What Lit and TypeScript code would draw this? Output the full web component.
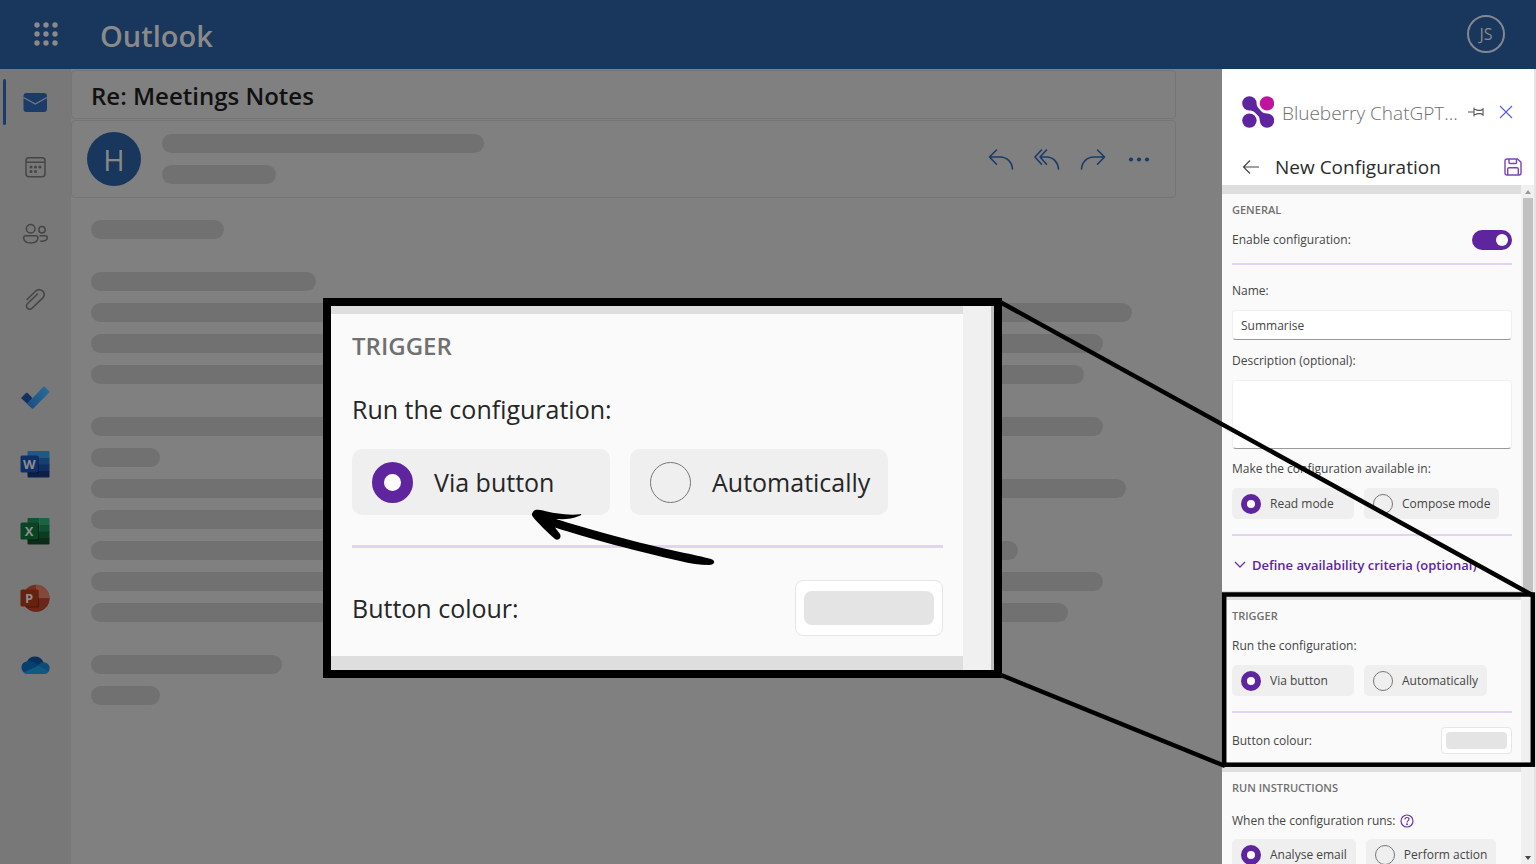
import { LitElement, html, css, svg, nothing } from "lit";
import { customElement, property, state } from "lit/decorators.js";
import { styleMap } from "lit/directives/style-map.js";

/** Placeholder paragraphs of the message body; each number is a line's width in percent. */
const BODY_LINES: number[][] = [
  [12.3],
  [20.7, 95.9, 93.3, 91.5],
  [93.3, 6.4, 95.4, 80, 85.4, 93.3, 90],
  [17.6, 6.4],
];

const icons = {
  waffle: svg`<svg width="26" height="26" viewBox="0 0 26 26" fill="currentColor">
    ${[4, 13, 22].map((y) => [4, 13, 22].map((x) => svg`<circle cx=${x} cy=${y} r="2.7"/>`))}</svg>`,
  mail: svg`<svg width="28" height="28" viewBox="0 0 28 28"><rect x="2.500" y="5" width="23.500" height="19" rx="3" fill="#1b3b68"/>
    <path d="M2.500 9.500 14.200 16 26 9.500" fill="none" stroke="#787878" stroke-width="1.300"/></svg>`,
  calendar: svg`<svg width="28" height="28" viewBox="0 0 28 28" fill="none" stroke="#454545" stroke-width="1.500"><rect x="5" y="3.700" width="19" height="19" rx="3"/>
    <path d="M5 8.200h19"/><g fill="#454545" stroke="none"><circle cx="10" cy="13" r="1.500"/><circle cx="14.500" cy="13" r="1.500"/><circle cx="19" cy="13" r="1.500"/><circle cx="10" cy="17.500" r="1.500"/><circle cx="14.500" cy="17.500" r="1.500"/></g></svg>`,
  people: svg`<svg width="28" height="28" viewBox="0 0 28 28" fill="none" stroke="#454545" stroke-width="1.500"><circle cx="9.700" cy="8.800" r="4.300"/>
    <circle cx="21" cy="9.800" r="3.200"/><path d="M4.700 15.700h10.200a2 2 0 0 1 2 2c0 3.300-3 5.200-7.100 5.200s-7.100-1.900-7.100-5.200a2 2 0 0 1 2-2zM18.500 15.700h5.800a2 2 0 0 1 2 2c0 2.300-2.500 3.700-7 3.400"/></svg>`,
  clip: svg`<svg width="28" height="28" viewBox="0 0 28 28" fill="none" stroke="#454545" stroke-width="1.500" stroke-linecap="round"><path d="M6 13.500 14.800 5a5 5 0 0 1 7.800 1.200c1.100 2 .6 4.200-.8 5.700L11 22.300a3.200 3.200 0 0 1-4.600-4.500L16.500 8"/></svg>`,
  todo: svg`<svg width="30" height="28" viewBox="0 0 30 28"><defs><linearGradient id="td" x1="0" y1="1" x2="1" y2="0"><stop offset="0" stop-color="#1b4a86"/><stop offset="1" stop-color="#286f98"/></linearGradient></defs>
    <path d="M1.500 14.500 6 10q.8-.6 1.600 0l4.800 5-5 6L1.500 15.500q-.4-.5 0-1z" fill="#14305f"/>
    <path d="M7 21 23.300 3.700q.7-.6 1.400 0l4.500 4.500q.5.600 0 1.200L13.300 25.500q-.8.600-1.500 0z" fill="url(#td)"/></svg>`,
  word: svg`<svg width="30" height="28" viewBox="0 0 30 28"><path d="M8.500 1h20q1 0 1 1v6h-22V2q0-1 1-1z" fill="#1f5785"/><path d="M7.500 8h22v7h-22z" fill="#163f70"/><path d="M7.500 14.500h22v7h-22z" fill="#0f2f62"/><path d="M7.500 21h22v5.500q0 1-1 1h-20q-1 0-1-1z" fill="#0a2048"/><path d="M7.500 6h10.500q1 0 1 1v15q0 1.500-1.500 1.500h-10z" opacity=".35"/><rect x=".5" y="5.500" width="17.500" height="17" rx="1.500" fill="#0e2f68"/>
    <text x="9.200" y="18.700" text-anchor="middle" class="glyph">W</text></svg>`,
  excel: svg`<svg width="30" height="28" viewBox="0 0 30 28"><path d="M8.500 1h11v7h-12V2q0-1 1-1z" fill="#115234"/><path d="M19.500 1h9q1 0 1 1v6h-10z" fill="#196442"/><path d="M7.500 8h12v7h-12z" fill="#0c3a22"/><path d="M19.500 8h10v7h-10z" fill="#11502f"/><path d="M7.500 14.500h22v7h-22z" fill="#0b3c20"/><path d="M7.500 21h22v5.500q0 1-1 1h-20q-1 0-1-1z" fill="#0c2c1a"/><path d="M7.500 6h10.500q1 0 1 1v15q0 1.500-1.500 1.500h-10z" opacity=".35"/><rect x=".5" y="5.500" width="17.500" height="17" rx="1.500" fill="#0a4523"/>
    <text x="9.200" y="18.700" text-anchor="middle" class="glyph">X</text></svg>`,
  powerpoint: svg`<svg width="30" height="28" viewBox="0 0 30 28"><circle cx="16" cy="14.200" r="13.500" fill="#74301e"/><path d="M16 .7a13.500 13.500 0 0 1 13.500 13.500H16z" fill="#84493a"/><path d="M16 14.200h13.500a13.500 13.500 0 0 1-27 0z" fill="#6a2618"/><path d="M5 6h13q1 0 1 1v15q0 1.500-1.500 1.500H6z" opacity=".35"/><rect x=".5" y="5.500" width="17.500" height="17" rx="1.500" fill="#66210f"/>
    <text x="9.200" y="18.700" text-anchor="middle" class="glyph">P</text></svg>`,
  onedrive: svg`<svg width="30" height="28" viewBox="0 0 30 28"><path d="M7 10.500a9 9 0 0 1 16.500 1L17 17z" fill="#05315c"/><path d="M6.500 22.500A6.200 6.200 0 0 1 7.500 10.200q4-.8 7.500 1.800l5 3-9 7.500z" fill="#083f70"/><path d="M18 14q3-3.500 7-2.500a5.700 5.700 0 0 1 3.500 9L16 16z" fill="#0c4c77"/><path d="M3.500 21.500 18.200 14.700l10.600 5.500q-1.300 2.800-4.800 2.800H7q-2.200 0-3.500-1.500z" fill="#105a82"/></svg>`,
  reply: svg`<svg width="28" height="24" viewBox="0 0 28 24" fill="none" stroke="currentColor" stroke-width="1.600" stroke-linecap="round" stroke-linejoin="round"><path d="M9.500 3 2.500 10l7 7.200M2.500 10H13c7 0 12 5 12.500 12"/></svg>`,
  replyAll: svg`<svg width="28" height="24" viewBox="0 0 28 24" fill="none" stroke="currentColor" stroke-width="1.600" stroke-linecap="round" stroke-linejoin="round"><path d="M8.500 3 2 10l6.500 7.200M13.500 3 7 10l6.500 7.200M7 10h6.500c6.500 0 11.500 5 12 12"/></svg>`,
  forward: svg`<svg width="28" height="24" viewBox="0 0 28 24" fill="none" stroke="currentColor" stroke-width="1.600" stroke-linecap="round" stroke-linejoin="round"><path d="M18.500 3l7 7-7 7.200M25.500 10H15C8 10 3 15 2.500 22"/></svg>`,
  more: svg`<svg width="28" height="24" viewBox="0 0 28 24" fill="currentColor"><circle cx="6" cy="12.500" r="2.100"/><circle cx="14" cy="12.500" r="2.100"/><circle cx="22" cy="12.500" r="2.100"/></svg>`,
  logo: svg`<svg width="32" height="32" viewBox="0 0 32 32" fill="#5f259f"><circle cx="25" cy="7.400" r="7.200" fill="#c0149f"/><circle cx="7.400" cy="24.600" r="7.200"/>
    <path d="M7.400.2a7.200 7.200 0 0 1 7.200 7.200c0 1.600.6 3 1.800 4.600l2.800 3.200c1.600 1.500 3.500 2.200 5.800 2.200a7.200 7.200 0 1 1-7.200 7.200c0-1.800-.6-3.600-2-5l-3-3.200c-1.700-1.400-3.300-1.800-5.400-1.800a7.200 7.200 0 0 1 0-14.400z"/></svg>`,
  pin: svg`<svg width="18" height="14" viewBox="0 0 18 14" fill="none" stroke="#555" stroke-width="1.100"><path d="M1 7h6M7 2.500v9M7 4.500h1.500q1.500.9 3 .9h2.500l2-1.600v6.400l-2-1.600h-2.500q-1.500 0-3 .9H7"/></svg>`,
  close: svg`<svg width="14" height="14" viewBox="0 0 14 14" fill="none" stroke="#5a5cf6" stroke-width="1.200"><path d="M1 1l12 12M13 1 1 13"/></svg>`,
  back: svg`<svg width="18" height="16" viewBox="0 0 18 16" fill="none" stroke="#444" stroke-width="1.200"><path d="M17 8H1.500M8 1.500 1.500 8 8 14.500"/></svg>`,
  save: svg`<svg width="18" height="18" viewBox="0 0 18 18" fill="none" stroke="#7a45b4" stroke-width="1.400" stroke-linejoin="round"><path d="M1 3q0-2 2-2h10.500L17 4.200V15q0 2-2 2H3q-2 0-2-2z"/><path d="M5 1v3.500q0 1 1 1h5.500q1 0 1-1V1M3.700 17v-6q0-1.300 1.300-1.300h8q1.300 0 1.300 1.300v6"/></svg>`,
  chevron: svg`<svg width="12" height="8" viewBox="0 0 12 8" fill="none" stroke="#6a35aa" stroke-width="1.300"><path d="M1 1l5 5 5-5"/></svg>`,
  help: svg`<svg width="14" height="14" viewBox="0 0 14 14" fill="none" stroke="#6a35aa" stroke-width="1.200"><circle cx="7" cy="7" r="6"/><path d="M5 5.500C5 4.200 5.800 3.500 7 3.500s2 .7 2 1.800c0 1.200-2 1.500-2 3.200"/><circle cx="7" cy="10.300" r=".4" fill="#6a35aa"/></svg>`,
};

@customElement("option-pair")
class OptionPair extends LitElement {
  @property() name = "";
  @property() label = "";
  @property({ type: Array }) options: string[] = [];
  @property({ type: Boolean, reflect: true }) large = false;
  @state() private chosen = 0;

  static styles = css`
    :host {
      display: block;
      --dot: 20px;
      --font: 12px;
      color: #454545;
    }
    :host([large]) {
      --dot: 41px;
      --font: 25px;
      color: #262626;
    }
    .group {
      display: flex;
      gap: 10px;
      margin: 0;
      padding: 0;
      border: 0;
    }
    .option {
      box-sizing: border-box;
      display: flex;
      align-items: center;
      gap: 9px;
      height: 31px;
      min-width: 122px;
      padding: 0 9px;
      border-radius: 5px;
      background: #efefef;
      font-size: var(--font);
      white-space: nowrap;
    }
    .dot {
      appearance: none;
      flex: none;
      box-sizing: border-box;
      width: var(--dot);
      height: var(--dot);
      margin: 0;
      border: 1px solid #777;
      border-radius: 50%;
    }
    .dot:checked {
      border: 6px solid #5f259f;
      background: #fff;
    }
    :host([large]) .group {
      gap: 20px;
    }
    :host([large]) .option {
      gap: 21px;
      height: 66px;
      min-width: 258px;
      padding: 0 14px 0 20px;
      border-radius: 10px;
    }
    :host([large]) .dot:checked {
      border-width: 12px;
    }
  `;

  render() {
    return html`<fieldset class="group" role="radiogroup" aria-label=${this.label}>
      ${this.options.map(
        (text, i) => html`<label class="option">
          <input class="dot" type="radio" name=${this.name} .checked=${i === this.chosen} @change=${() => (this.chosen = i)} />
          <span>${text}</span>
        </label>`
      )}
    </fieldset>`;
  }
}

@customElement("trigger-section")
class TriggerSection extends LitElement {
  @property({ type: Boolean, reflect: true }) large = false;

  static styles = css`
    :host {
      display: block;
      padding: 0 9px 9px 10px;
      border-top: 9px solid #dedede;
      background: #fafafa;
      color: #454545;
      font-size: 12px;
      line-height: 20px;
    }
    .title {
      margin: 0;
      color: #707070;
      font-size: 11px;
      font-weight: 600;
      line-height: 31px;
    }
    .label {
      margin: 5px 0 9px;
    }
    .rule {
      height: 2px;
      margin: 15px 0 14px;
      border: 0;
      background: #e0d4ef;
    }
    .row {
      display: flex;
      align-items: center;
      justify-content: space-between;
    }
    .colour {
      appearance: none;
      box-sizing: border-box;
      width: 71px;
      height: 27px;
      padding: 4px;
      border: 1px solid #e6e6e6;
      border-radius: 4px;
      background: #fff;
    }
    .colour::-webkit-color-swatch-wrapper {
      padding: 0;
    }
    .colour::-webkit-color-swatch {
      border: 0;
      border-radius: 4px;
    }
    :host([large]) {
      padding: 0 20px 20px 21px;
      border-top-width: 8px;
      color: #262626;
      font-size: 25px;
      line-height: 40px;
    }
    :host([large]) .title {
      font-size: 24px;
      line-height: 64px;
    }
    :host([large]) .label {
      margin: 11px 0 20px;
    }
    :host([large]) .rule {
      height: 3px;
      margin: 30px 0 32px;
    }
    :host([large]) .colour {
      width: 148px;
      height: 56px;
      padding: 10px 8px;
      border-radius: 8px;
    }
    :host([large]) .colour::-webkit-color-swatch {
      border-radius: 8px;
    }
  `;

  render() {
    return html`
      <h2 class="title">TRIGGER</h2>
      <div class="label">Run the configuration:</div>
      <option-pair
        name="trigger"
        label="Run the configuration"
        .options=${["Via button", "Automatically"]}
        ?large=${this.large}
      ></option-pair>
      <hr class="rule" />
      <div class="row">
        <label for="colour">Button colour:</label>
        <input class="colour" id="colour" type="color" value="#e4e4e4" />
      </div>
    `;
  }
}

@customElement("config-panel")
class ConfigPanel extends LitElement {
  static styles = css`
    :host {
      display: flex;
      flex-direction: column;
      box-sizing: border-box;
      min-height: 0;
      overflow: hidden;
      border-right: 2px solid #e4e4e4;
      background: #fff;
      color: #454545;
      font-size: 12px;
      line-height: 20px;
    }
    button {
      display: flex;
      align-items: center;
      padding: 0;
      border: 0;
      background: none;
      font: inherit;
      cursor: pointer;
    }
    .app {
      display: flex;
      align-items: center;
      gap: 8px;
      height: 32px;
      padding: 27px 21px 20px 20px;
    }
    .logo {
      display: flex;
    }
    .app-name {
      flex: 1;
      color: #6f6f6f;
      font-size: 19px;
      font-weight: 300;
      line-height: 32px;
      padding-top: 2px;
      white-space: nowrap;
    }
    .close {
      margin-left: 6px;
    }
    .heading {
      display: flex;
      align-items: center;
      gap: 15px;
      height: 37px;
      padding: 0 12px 0 20px;
    }
    .heading-text {
      flex: 1;
      margin: 0;
      color: #2c2c2c;
      font-size: 19px;
      font-weight: 400;
    }
    .body {
      display: flex;
      flex: 1;
      min-height: 0;
    }
    .content {
      flex: 1;
      overflow: hidden;
      background: #fafafa;
    }
    .section {
      padding: 0 9px 0 10px;
      border-top: 9px solid #dedede;
    }
    .title {
      margin: 0;
      color: #707070;
      font-size: 11px;
      font-weight: 600;
      line-height: 31px;
    }
    .switch-row {
      display: flex;
      align-items: center;
      justify-content: space-between;
      height: 29px;
    }
    .switch {
      appearance: none;
      display: flex;
      align-items: center;
      justify-content: flex-end;
      box-sizing: border-box;
      width: 40px;
      height: 20px;
      margin: 0;
      padding: 0 4px;
      border-radius: 10px;
      background: #5f259f;
    }
    .switch::before {
      content: "";
      width: 12px;
      height: 12px;
      border-radius: 50%;
      background: #fff;
    }
    .rule {
      height: 2px;
      margin: 9px 0 16px;
      border: 0;
      background: #e0d4ef;
    }
    .label {
      display: block;
      margin: 11px 0 9px;
    }
    .field {
      display: block;
      box-sizing: border-box;
      width: 100%;
      height: 30px;
      padding: 0 8px;
      border: 1px solid #f0f0f0;
      border-bottom-color: #999;
      border-radius: 4px;
      background: #fff;
      color: #454545;
      font: inherit;
      resize: none;
    }
    .area {
      height: 69px;
    }
    .modes {
      margin: 10px 0 9px;
    }
    .rule-low {
      margin: 15px 0 19px;
    }
    .expand {
      gap: 6px;
      padding: 0 2px 16px;
      color: #5f259f;
      font-size: 13px;
      font-weight: 600;
      line-height: 20px;
      white-space: nowrap;
    }
    .with-help {
      display: flex;
      align-items: center;
      gap: 5px;
      margin: 8px 0;
    }
    .scroll {
      display: flex;
      flex-direction: column;
      align-items: center;
      justify-content: space-between;
      width: 13px;
      background: #f0f0f0;
    }
    .arrow {
      flex: none;
      width: 0;
      margin: 5px 0 4px;
      border: 3px solid transparent;
      border-top: 0;
      border-bottom: 4px solid #999;
    }
    .arrow-down {
      border-top: 4px solid #444;
      border-bottom: 0;
    }
    .thumb {
      width: 10px;
      height: 58%;
      margin-bottom: auto;
      background: #c1c1c1;
    }
  `;

  render() {
    return html`
      <div class="app">
        <span class="logo">${icons.logo}</span>
        <span class="app-name">Blueberry ChatGPT...</span>
        <button aria-label="Pin">${icons.pin}</button>
        <button class="close" aria-label="Close">${icons.close}</button>
      </div>
      <div class="heading">
        <button aria-label="Back">${icons.back}</button>
        <h1 class="heading-text">New Configuration</h1>
        <button aria-label="Save">${icons.save}</button>
      </div>
      <div class="body">
        <div class="content">
          <section class="section">
            <h2 class="title">GENERAL</h2>
            <div class="switch-row">
              <label for="enable">Enable configuration:</label>
              <input class="switch" id="enable" type="checkbox" role="switch" checked />
            </div>
            <hr class="rule" />
            <label class="label" for="name">Name:</label>
            <input class="field" id="name" type="text" value="Summarise" />
            <label class="label" for="description">Description (optional):</label>
            <textarea class="field area" id="description"></textarea>
            <div class="label modes">Make the configuration available in:</div>
            <option-pair name="mode" label="Make the configuration available in" .options=${["Read mode", "Compose mode"]}></option-pair>
            <hr class="rule rule-low" />
            <button class="expand">${icons.chevron}Define availability criteria (optional)</button>
          </section>
          <trigger-section></trigger-section>
          <section class="section">
            <h2 class="title">RUN INSTRUCTIONS</h2>
            <div class="with-help">When the configuration runs: ${icons.help}</div>
            <option-pair name="action" label="When the configuration runs" .options=${["Analyse email", "Perform action"]}></option-pair>
          </section>
        </div>
        <div class="scroll"><i class="arrow"></i><i class="thumb"></i><i class="arrow arrow-down"></i></div>
      </div>
    `;
  }
}

@customElement("app-root")
class AppRoot extends LitElement {
  static styles = css`
    :host {
      position: relative;
      display: flex;
      flex-direction: column;
      height: 100vh;
      overflow: hidden;
      background: #808080;
      font-family: "Open Sans", "Noto Sans", sans-serif;
    }
    button {
      display: flex;
      padding: 0;
      border: 0;
      background: none;
      color: inherit;
      font: inherit;
      cursor: pointer;
    }
    .top {
      display: flex;
      align-items: center;
      box-sizing: border-box;
      height: 69px;
      padding: 0 31px 1px 33px;
      background: #19365c;
      color: #8a8a8a;
    }
    .brand {
      flex: 1;
      margin-left: 41px;
      padding-top: 4px;
      font-size: 29px;
      font-weight: 600;
      line-height: 40px;
    }
    .user {
      box-sizing: border-box;
      align-items: center;
      justify-content: center;
      width: 38px;
      height: 38px;
      border: 2px solid #838790;
      border-radius: 50%;
      font-size: 16px;
    }
    .work {
      display: grid;
      grid-template-columns: 71px minmax(0, 1fr) 314px;
      flex: 1;
      min-height: 0;
    }
    .rail {
      background: #787878;
    }
    .item {
      position: relative;
      display: flex;
      align-items: center;
      justify-content: center;
      height: 66px;
      padding-right: 2px;
    }
    .item.active::before {
      content: "";
      position: absolute;
      left: 3px;
      top: 10px;
      width: 3px;
      height: 46px;
      border-radius: 2px;
      background: #1b3b68;
    }
    .apps {
      padding-top: 30px;
    }
    .apps .item {
      height: 67px;
    }
    .glyph {
      fill: #8d8d8d;
      font-size: 13px;
      font-weight: 700;
    }
    .mail {
      padding-right: 46px;
    }
    .card {
      display: flex;
      align-items: center;
      box-sizing: border-box;
      border: 1px solid #757575;
      border-radius: 4px;
    }
    .subject {
      height: 49px;
      margin: 1px 0 0;
      padding: 2px 19px 0;
      color: #111;
      font-size: 24px;
      font-weight: 600;
    }
    .sender {
      gap: 21px;
      height: 78px;
      margin-top: 1px;
      padding: 0 22px 0 15px;
    }
    .avatar {
      display: flex;
      align-items: center;
      justify-content: center;
      width: 54px;
      height: 54px;
      border-radius: 50%;
      background: #19365c;
      color: #888;
      font-size: 29px;
    }
    .who {
      display: grid;
      flex: 1;
      gap: 12px;
    }
    .bar {
      height: 19px;
      border-radius: 10px;
      background: #717171;
    }
    .from {
      width: 322px;
    }
    .to {
      width: 114px;
    }
    .actions {
      display: flex;
      gap: 18px;
      color: #1b3b68;
    }
    .message {
      display: grid;
      gap: 33px;
      padding: 22px 0 0 20px;
    }
    .para {
      display: grid;
      gap: 12px;
    }
    .callout {
      position: absolute;
      top: 298px;
      right: 534px;
      display: flex;
      box-sizing: border-box;
      width: 679px;
      height: 380px;
      border: 8px solid #000;
      background: #dedede;
    }
    .callout-body {
      flex: 1;
      align-self: flex-start;
    }
    .callout-scroll {
      width: 28px;
      border-right: 3px solid #bdbdbd;
      background: #f0f0f0;
    }
    .overlay {
      position: absolute;
      top: 0;
      right: 0;
      pointer-events: none;
    }
  `;

  private item(icon: unknown, label: string, active = false) {
    return html`<a class="item ${active ? "active" : ""}" href="#" aria-label=${label} aria-current=${active ? "page" : nothing}>${icon}</a>`;
  }

  render() {
    return html`
      <header class="top">
        <button aria-label="App launcher">${icons.waffle}</button>
        <span class="brand">Outlook</span>
        <button class="user">JS</button>
      </header>
      <div class="work">
        <nav class="rail">
          ${this.item(icons.mail, "Mail", true)} ${this.item(icons.calendar, "Calendar")}
          ${this.item(icons.people, "People")} ${this.item(icons.clip, "Files")}
          <div class="apps">
            ${this.item(icons.todo, "To Do")} ${this.item(icons.word, "Word")} ${this.item(icons.excel, "Excel")}
            ${this.item(icons.powerpoint, "PowerPoint")} ${this.item(icons.onedrive, "OneDrive")}
          </div>
        </nav>
        <main class="mail">
          <h1 class="card subject">Re: Meetings Notes</h1>
          <div class="card sender">
            <span class="avatar">H</span>
            <div class="who"><div class="bar from"></div><div class="bar to"></div></div>
            <div class="actions">
              <button aria-label="Reply">${icons.reply}</button>
              <button aria-label="Reply all">${icons.replyAll}</button>
              <button aria-label="Forward">${icons.forward}</button>
              <button aria-label="More">${icons.more}</button>
            </div>
          </div>
          <div class="message">
            ${BODY_LINES.map(
              (para) => html`<div class="para">
                ${para.map((w) => html`<div class="bar" style=${styleMap({ width: `${w}%` })}></div>`)}
              </div>`
            )}
          </div>
        </main>
        <config-panel></config-panel>
      </div>

      <div class="callout">
        <trigger-section class="callout-body" large></trigger-section>
        <div class="callout-scroll"></div>
      </div>
      <svg class="overlay" width="1036" height="864" viewBox="500 0 1036 864" aria-hidden="true">
        <g fill="none" stroke="#000" stroke-width="4.500">
          <rect x="1224.200" y="594.500" width="308.600" height="170.200" />
          <path d="M1001 302.500 1533 595.500M1001 675 1225 766" />
        </g>
        <path
          d="M533 512C534 509 539 509.500 543 510.500 552 513 570 516 581 514 582 514.500 581 515.500 579 516 572 519 565 519.500 556 519 585 528 640 543.500 680 552 692 554.500 704 557 711 559 716 560.500 715 565 709 565 700 565 690 563.500 680 561 640 552 590 539 555 527.500L560 534C562 538 558 541 555 539 548 533 537 522 533 517 531.500 515 531.500 513.500 533 512z"
        />
      </svg>
    `;
  }
}
